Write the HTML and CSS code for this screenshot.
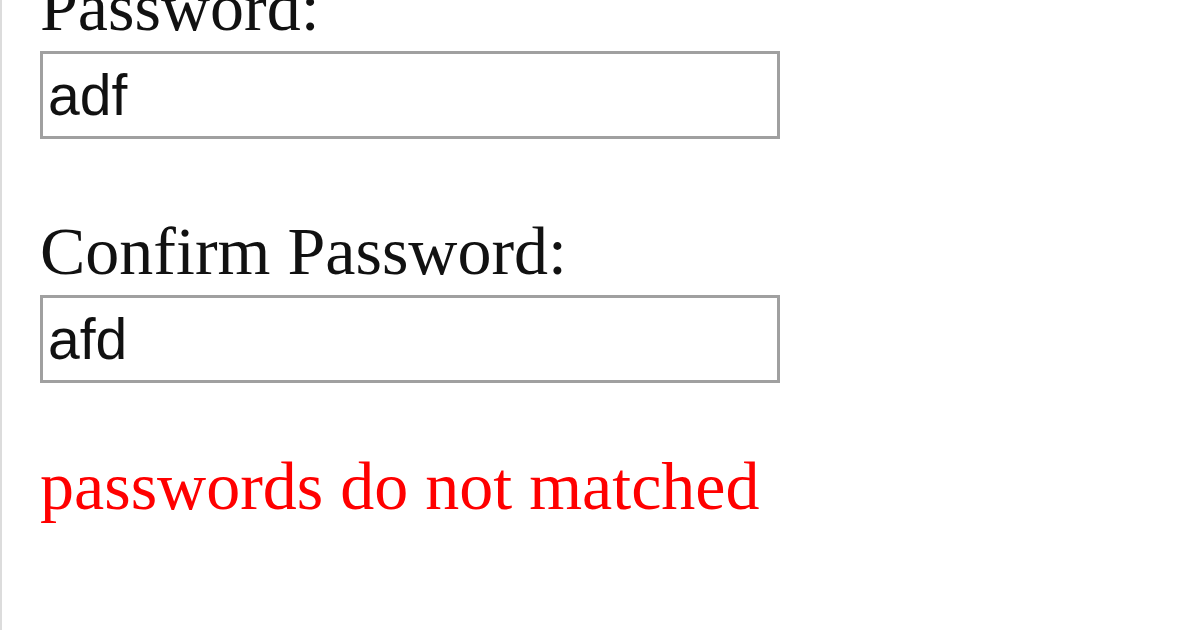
FILE: index.html
```html
<!DOCTYPE html>
<html>
<head>
<meta charset="utf-8">
<link rel="stylesheet" href="styles.css">
</head>
<body>
<div class="page">
  <form class="form">
    <label class="label" for="pw">Password:</label>
    <input class="field" id="pw" type="text" value="adf">
    <label class="label label-gap" for="cpw">Confirm Password:</label>
    <input class="field" id="cpw" type="text" value="afd">
    <p class="error">passwords do not matched</p>
  </form>
</div>
</body>
</html>
```
FILE: styles.css
```css
html, body {
  margin: 0;
  padding: 0;
  background: #fff;
  overflow: hidden;
  height: 630px;
}
.page {
  border-left: 2px solid #dcdcdc;
  padding-left: 38px;
  height: 660px;
  margin-top: -30px;
  box-sizing: border-box;
}
.form {
  display: flex;
  flex-direction: column;
  align-items: flex-start;
}
.label {
  display: block;
  font-family: "Liberation Serif", "Times New Roman", serif;
  font-size: 68px;
  line-height: 75px;
  color: #111;
}
.label-gap {
  margin-top: 75px;
}
.field {
  display: block;
  margin: 6px 0 0 0;
  width: 740px;
  height: 88px;
  box-sizing: border-box;
  border: 3px solid #a0a0a0;
  padding: 0 5px;
  font-family: "Liberation Sans", Arial, sans-serif;
  font-size: 57px;
  color: #111;
  background: #fff;
  outline: none;
}
.error {
  margin: 66px 0 0 0;
  font-family: "Liberation Serif", "Times New Roman", serif;
  font-size: 68px;
  line-height: 75px;
  color: #f00;
}
```
